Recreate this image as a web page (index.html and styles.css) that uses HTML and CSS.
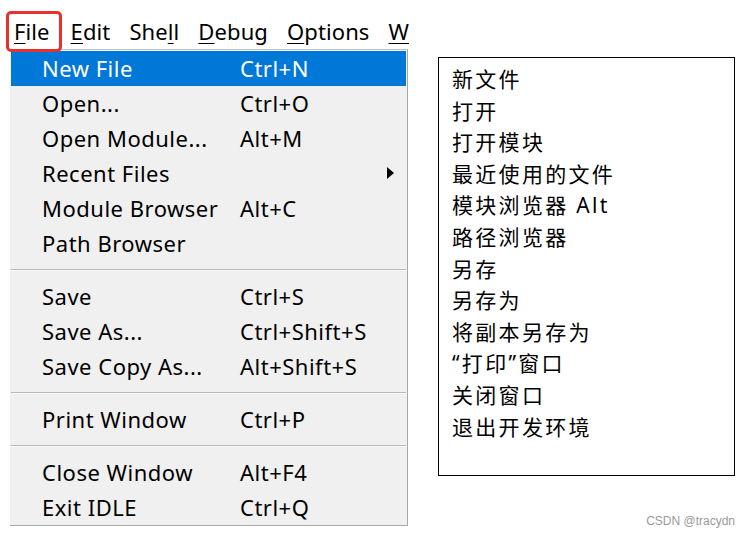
FILE: index.html
```html
<!DOCTYPE html>
<html lang="en">
<head>
    <meta charset="UTF-8" />
    <title>IDLE File menu</title>
    <link rel="stylesheet" href="styles.css">
</head>
<body>
    <div class="page">
        <div class="idle">
            <!-- Menu bar across the top of the IDLE window -->
            <div class="menubar">
                <span class="menubar-item active"><u>F</u>ile</span>
                <span class="menubar-item"><u>E</u>dit</span>
                <span class="menubar-item">She<u>l</u>l</span>
                <span class="menubar-item"><u>D</u>ebug</span>
                <span class="menubar-item"><u>O</u>ptions</span>
                <span class="menubar-item"><u>W</u></span>
            </div>

            <!-- Drop-down File menu -->
            <div class="menu">
                <div class="menu-row selected"><span class="label">New File</span><span class="key">Ctrl+N</span></div>
                <div class="menu-row"><span class="label">Open...</span><span class="key">Ctrl+O</span></div>
                <div class="menu-row"><span class="label">Open Module...</span><span class="key">Alt+M</span></div>
                <div class="menu-row"><span class="label">Recent Files</span><span class="key"></span><span class="arrow"></span></div>
                <div class="menu-row"><span class="label">Module Browser</span><span class="key">Alt+C</span></div>
                <div class="menu-row"><span class="label">Path Browser</span><span class="key"></span></div>
                <div class="menu-sep"></div>
                <div class="menu-row"><span class="label">Save</span><span class="key">Ctrl+S</span></div>
                <div class="menu-row"><span class="label">Save As...</span><span class="key">Ctrl+Shift+S</span></div>
                <div class="menu-row"><span class="label">Save Copy As...</span><span class="key">Alt+Shift+S</span></div>
                <div class="menu-sep"></div>
                <div class="menu-row"><span class="label">Print Window</span><span class="key">Ctrl+P</span></div>
                <div class="menu-sep"></div>
                <div class="menu-row"><span class="label">Close Window</span><span class="key">Alt+F4</span></div>
                <div class="menu-row"><span class="label">Exit IDLE</span><span class="key">Ctrl+Q</span></div>
            </div>
        </div>

        <!-- Chinese translation of the menu entries -->
        <div class="notes">
            <div>新文件</div>
            <div>打开</div>
            <div>打开模块</div>
            <div>最近使用的文件</div>
            <div>模块浏览器 Alt</div>
            <div>路径浏览器</div>
            <div>另存</div>
            <div>另存为</div>
            <div>将副本另存为</div>
            <div>“打印”窗口</div>
            <div>关闭窗口</div>
            <div>退出开发环境</div>
        </div>
    </div>

    <div class="watermark">CSDN @tracydn</div>
</body>
</html>
```

FILE: styles.css
```css
/* General page */
body {
    margin: 0;
    background-color: #ffffff;
    color: #000000;
    font-family: "Noto Sans", "Noto Sans CJK SC", sans-serif;
    width: 751px;
    height: 539px;
    overflow: hidden;
}

.page {
    display: flex;
    align-items: flex-start;
}

/* Left side: IDLE window */
.idle {
    width: 438px;
}

.menubar {
    display: flex;
    height: 38px;
    margin-top: 11px;
    padding-left: 6px;
    font-size: 22px;
    letter-spacing: 0.1px;
    line-height: 35px;
    white-space: nowrap;
}

.menubar-item {
    margin-right: 19px;
    height: 35px;
    padding-top: 3px;
}

.menubar-item u {
    text-underline-offset: 3px;
    text-decoration-thickness: 1px;
}

/* The red frame drawn round "File" */
.menubar-item.active {
    border: 3px solid #e8302c;
    border-radius: 5px;
    height: 41px;
    box-sizing: border-box;
    padding: 0 9px 0 5px;
    margin-right: 9px;
}

/* Drop-down menu */
.menu {
    width: 395px;
    margin-left: 10px;
    background-color: #f0f0f0;
    border-top: 1px solid #c4c4c4;
    border-right: 1px solid #a8a8a8;
    border-bottom: 1px solid #a8a8a8;
    padding: 1px 1px 0 1px;
    font-size: 22px;
    letter-spacing: 0.5px;
}

.menu-row {
    display: flex;
    align-items: center;
    height: 35px;
    box-sizing: border-box;
    padding-left: 31px;
    padding-bottom: 2px;
    white-space: nowrap;
}

.menu-row.selected {
    background-color: #0078d7;
    color: #ffffff;
}

.label {
    width: 198px;
}

.key {
    flex: 1;
}

.arrow {
    width: 0;
    height: 0;
    border-top: 6px solid transparent;
    border-bottom: 6px solid transparent;
    border-left: 7px solid #000000;
    margin-right: 12px;
}

.menu-sep {
    height: 18px;
    display: flex;
    align-items: center;
}

.menu-sep::before {
    content: "";
    flex: 1;
    height: 1px;
    background-color: #b8b8b8;
    border-bottom: 1px solid #fafafa;
}

/* Right side: translation box */
.notes {
    width: 297px;
    height: 419px;
    margin-top: 57px;
    border: 1px solid #000000;
    padding: 6px 0 0 13px;
    box-sizing: border-box;
    font-size: 21px;
    line-height: 31.6px;
    letter-spacing: 2.3px;
}

.watermark {
    position: absolute;
    right: 16px;
    top: 514px;
    font-family: "Liberation Sans", Arial, sans-serif;
    font-size: 12px;
    color: #9a9a9a;
}
```
